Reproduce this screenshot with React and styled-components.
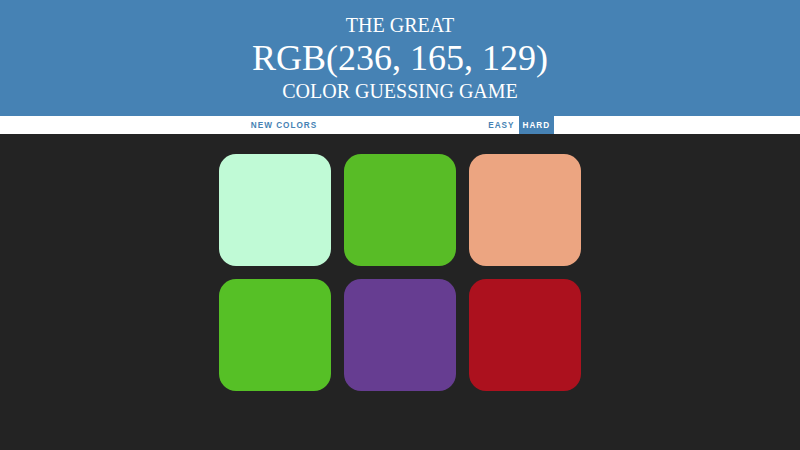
import React, { useState } from "react";
import styled, { createGlobalStyle } from "styled-components";

const GlobalStyle = createGlobalStyle`
  html, body {
    margin: 0;
    padding: 0;
    background: #232323;
    font-family: "Liberation Sans", Arial, sans-serif;
  }
`;

const Header = styled.h1`
  margin: 0;
  padding: 13px 0 11px;
  background: #4682b4;
  color: #ffffff;
  text-align: center;
  font-family: "Liberation Serif", "Times New Roman", serif;
  font-weight: normal;
`;

const HeadLine = styled.span`
  display: block;
  font-size: ${(p) => p.$size}px;
  line-height: ${(p) => p.$lh}px;
`;

const Stripe = styled.div`
  height: 18px;
  background: #ffffff;
  display: flex;
  justify-content: center;
  align-items: stretch;
`;

const StripeButton = styled.button`
  border: none;
  margin: 0;
  height: 100%;
  padding: 0 ${(p) => p.$pad}px;
  background: ${(p) => (p.$selected ? "#4682b4" : "transparent")};
  color: ${(p) => (p.$selected ? "#ffffff" : "#4682b4")};
  font-family: "Liberation Sans", Arial, sans-serif;
  font-size: 8.2px;
  font-weight: 700;
  letter-spacing: 1px;
  text-transform: uppercase;
  cursor: pointer;
`;

const Message = styled.span`
  display: inline-block;
  width: 162px;
`;

const Board = styled.div`
  width: 362.5px;
  margin: 0 auto;
  padding-top: 19.5px;
  display: grid;
  grid-template-columns: repeat(3, 112.5px);
  gap: 12.5px;
`;

const Square = styled.div`
  width: 112.5px;
  height: 112.5px;
  border-radius: 17px;
  background: ${(p) => p.$color};
`;

const colors = [
  "rgb(192, 250, 214)",
  "rgb(88, 188, 38)",
  "rgb(236, 165, 129)",
  "rgb(86, 192, 38)",
  "rgb(102, 61, 145)",
  "rgb(172, 17, 30)",
];

export default function App() {
  const [mode, setMode] = useState("hard");
  return (
    <>
      <GlobalStyle />
      <Header>
        <HeadLine $size={20} $lh={25}>THE GREAT</HeadLine>
        <HeadLine $size={36} $lh={40}>RGB(236, 165, 129)</HeadLine>
        <HeadLine $size={20} $lh={27}>COLOR GUESSING GAME</HeadLine>
      </Header>
      <Stripe>
        <StripeButton $pad={5}>New Colors</StripeButton>
        <Message />
        <StripeButton $pad={4} $selected={mode === "easy"} onClick={() => setMode("easy")}>
          Easy
        </StripeButton>
        <StripeButton $pad={4} $selected={mode === "hard"} onClick={() => setMode("hard")}>
          Hard
        </StripeButton>
      </Stripe>
      <Board>
        {colors.map((c, i) => (
          <Square key={i} $color={c} />
        ))}
      </Board>
    </>
  );
}
